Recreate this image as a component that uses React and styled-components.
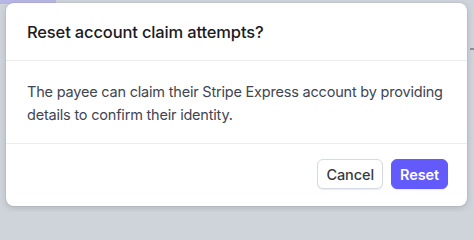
import React from 'react';
import styled, { createGlobalStyle } from 'styled-components';

const GlobalStyle = createGlobalStyle`
  html, body {
    margin: 0;
    padding: 0;
    background: #cfd3da;
  }
  body {
    font-family: Inter, "Noto Sans", "Liberation Sans", sans-serif;
    -webkit-font-smoothing: antialiased;
  }
`;

const Backdrop = styled.div`
  width: 474px;
  height: 212px;
  background: #cfd3da;
  position: relative;
  overflow: hidden;
  box-sizing: border-box;
  padding: 3px 7px 6px 6px;
  display: flex;
`;

const PageHint = styled.div`
  position: absolute;
  top: 0;
  left: 0;
  width: 56px;
  height: 4px;
  background: #b8b6e4;
`;

const SideHint = styled.div`
  position: absolute;
  top: 48px;
  right: 0;
  width: 4px;
  height: 2px;
  background: #8a8f99;
`;

const Dialog = styled.div`
  flex: 1;
  background: #ffffff;
  border-radius: 8px;
  box-shadow: 0 2px 6px rgba(48, 55, 70, 0.18), 0 0 0 1px rgba(48, 55, 70, 0.05);
  display: flex;
  flex-direction: column;
  overflow: hidden;
  position: relative;
  z-index: 1;
`;

const Header = styled.div`
  height: 57px;
  display: flex;
  align-items: center;
  padding: 0 21px;
  border-bottom: 1px solid #ebeef1;
`;

const Title = styled.h2`
  margin: 0;
  font-size: 16.5px;
  font-weight: 500;
  color: #1a1b25;
  letter-spacing: -0.15px;
`;

const Body = styled.div`
  height: 83px;
  box-sizing: border-box;
  padding: 19px 21px 0;
  border-bottom: 1px solid #ebeef1;
`;

const Text = styled.p`
  margin: 0;
  font-size: 14.5px;
  line-height: 23px;
  letter-spacing: -0.2px;
  color: #414552;
`;

const Footer = styled.div`
  flex: 1;
  display: flex;
  justify-content: flex-end;
  align-items: flex-start;
  gap: 8px;
  padding: 15px 19px 0;
`;

const Button = styled.button`
  height: 30px;
  padding: 0 8px;
  border-radius: 6px;
  font-family: inherit;
  font-size: 14.5px;
  letter-spacing: -0.1px;
  font-weight: ${(p) => (p.$primary ? 600 : 500)};
  cursor: pointer;
  border: 1px solid ${(p) => (p.$primary ? '#625afa' : '#d5dbe1')};
  background: ${(p) => (p.$primary ? '#625afa' : '#ffffff')};
  color: ${(p) => (p.$primary ? '#ffffff' : '#353a44')};
  box-shadow: 0 1px 1px rgba(0, 0, 0, 0.08);
`;

const App = () => {
  return (
    <Backdrop>
      <GlobalStyle />
      <PageHint />
      <SideHint />
      <Dialog>
        <Header>
          <Title>Reset account claim attempts?</Title>
        </Header>
        <Body>
          <Text>
            The payee can claim their Stripe Express account by providing details to confirm their identity.
          </Text>
        </Body>
        <Footer>
          <Button>Cancel</Button>
          <Button $primary>Reset</Button>
        </Footer>
      </Dialog>
    </Backdrop>
  );
};

export default App;
